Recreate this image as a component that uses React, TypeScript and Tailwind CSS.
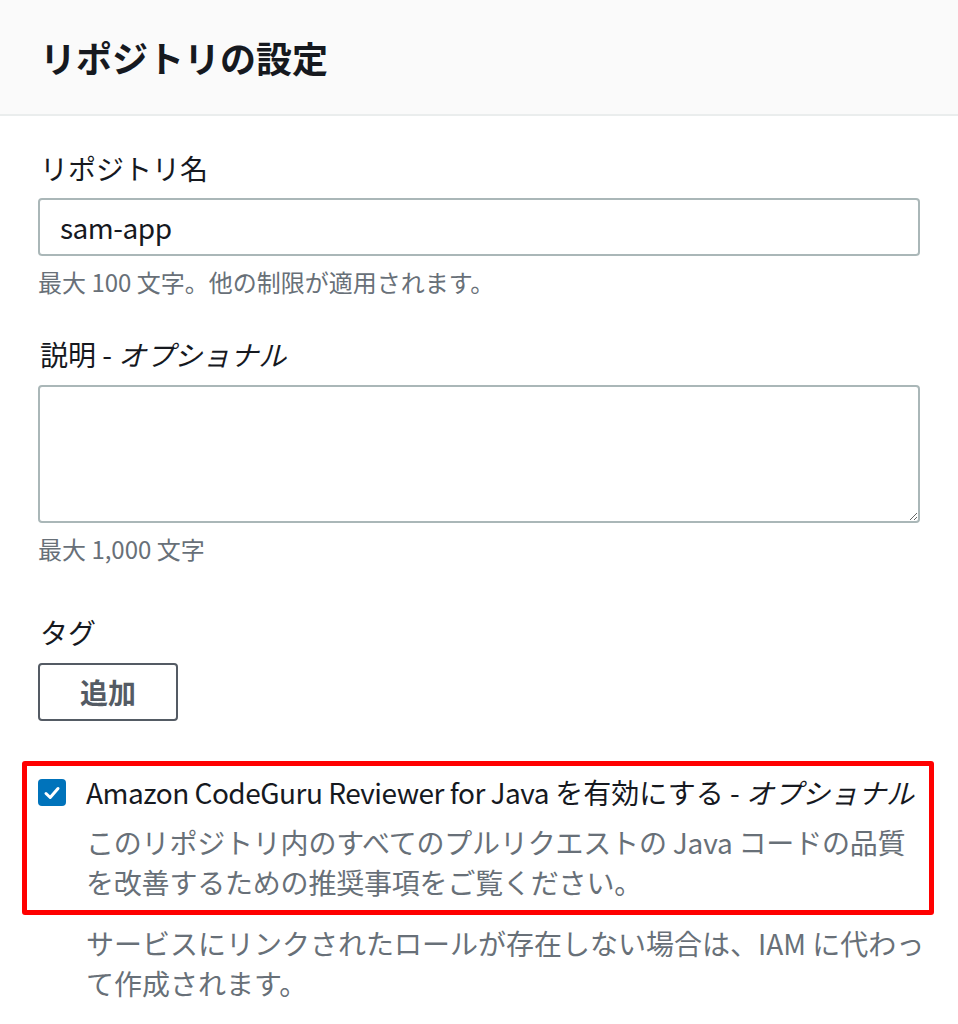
import React from "react";

const font = { fontFamily: '"Noto Sans CJK JP", "Noto Sans", sans-serif' };

export default function App() {
  return (
    <div className="w-[958px] min-h-[1024px] bg-white text-[#16191f]" style={font}>
      <div className="h-[116px] bg-[#fafafa] border-b-2 border-[#eaeded] flex items-center pl-[40px]">
        <h1 className="text-[36px] font-bold leading-[44px] text-[#16191f]">リポジトリの設定</h1>
      </div>

      <div className="pl-[38px] pr-[38px] pt-[32px]">
        <label className="block text-[28px] leading-[40px] pl-[2px]">リポジトリ名</label>
        <div className="mt-[10px] h-[58px] border-2 border-[#aab7b8] rounded-[4px] flex items-center pl-[20px] text-[28px] text-[#16191f] tracking-[-0.5px]">
          sam-app
        </div>
        <p className="mt-[10px] text-[24px] leading-[32px] text-[#687078]">最大 100 文字。他の制限が適用されます。</p>

        <label className="block mt-[36px] text-[28px] leading-[40px] pl-[2px]">
          説明 - <span className="italic">オプショナル</span>
        </label>
        <textarea
          className="mt-[11px] block w-full h-[138px] border-2 border-[#aab7b8] rounded-[4px] resize-y outline-none"
          defaultValue=""
        />
        <p className="mt-[10px] text-[24px] leading-[32px] text-[#687078]">最大 1,000 文字</p>

        <label className="block mt-[47px] text-[28px] leading-[40px] pl-[2px]">タグ</label>
        <button className="mt-[11px] w-[140px] h-[58px] border-2 border-[#545b64] rounded-[4px] text-[28px] font-bold text-[#545b64] flex items-center justify-center">
          追加
        </button>

        <div className="mt-[40px] ml-[-16px] mr-[-14px] border-[5px] border-[#ff0000] rounded-[3px] pt-[6px] pb-[8px] pl-[11px] flex">
          <div className="pt-[7px] shrink-0">
            <div className="w-[28px] h-[27px] rounded-[4px] bg-[#0073bb] flex items-center justify-center">
              <svg width="20" height="20" viewBox="0 0 20 20" fill="none">
                <path d="M4 10.5 L8.2 14.5 L16 5.5" stroke="white" strokeWidth="3" strokeLinecap="round" strokeLinejoin="round" />
              </svg>
            </div>
          </div>
          <div className="pl-[20px]">
            <div className="text-[28px] leading-[40px] text-[#16191f] whitespace-nowrap">
              <span className="tracking-[-0.5px]">Amazon CodeGuru Reviewer for Java</span> を有効にする - <span className="italic">オプショナル</span>
            </div>
            <div className="text-[28px] leading-[40px] text-[#687078] mt-[10px] whitespace-nowrap tracking-[-0.2px]">
              このリポジトリ内のすべてのプルリクエストの Java コードの品質
              <br />
              を改善するための推奨事項をご覧ください。
            </div>
          </div>
        </div>

        <div className="mt-[8px] pl-[48px] text-[28px] leading-[40px] text-[#687078] whitespace-nowrap">
          サービスにリンクされたロールが存在しない場合は、IAM に代わっ
          <br />
          て作成されます。
        </div>
      </div>
    </div>
  );
}
